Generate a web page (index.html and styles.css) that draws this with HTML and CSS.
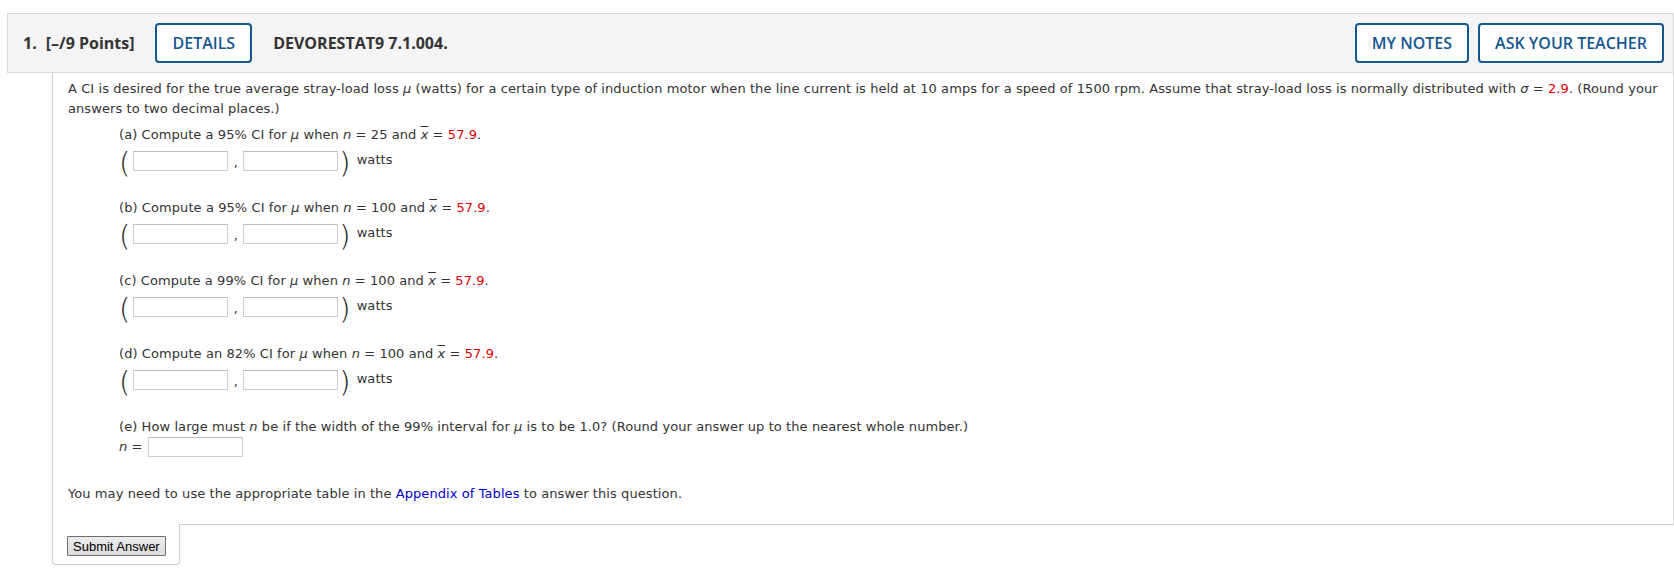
FILE: index.html
```html
<!DOCTYPE html>
<html lang="en">
<head>
<meta charset="utf-8">
<title>DEVORESTAT9 7.1.004.</title>
<link rel="stylesheet" href="styles.css">
</head>
<body>
<div class="question">
  <div class="q-header">
    <span class="q-num">1.</span>
    <span class="q-points">[–/9 Points]</span>
    <button class="hbtn">DETAILS</button>
    <span class="q-id">DEVORESTAT9 7.1.004.</span>
    <span class="spacer"></span>
    <button class="hbtn">MY NOTES</button>
    <button class="hbtn">ASK YOUR TEACHER</button>
  </div>
  <div class="q-body">
    <p class="intro">A CI is desired for the true average stray-load loss <i>μ</i> (watts) for a certain type of induction motor when the line current is held at 10 amps for a speed of 1500 rpm. Assume that stray-load loss is normally distributed with <i>σ</i> = <span class="red">2.9</span>. (Round your answers to two decimal places.)</p>

    <div class="part">
      <div class="part-q">(a) Compute a 95% CI for <i>μ</i> when <i>n</i> = 25 and <i class="xbar">x</i> = <span class="red">57.9</span>.</div>
      <div class="ci-row"><span class="paren lp">(</span><span class="box"></span><span class="comma">,</span><span class="box"></span><span class="paren rp">)</span><span class="unit">watts</span></div>
    </div>

    <div class="part">
      <div class="part-q">(b) Compute a 95% CI for <i>μ</i> when <i>n</i> = 100 and <i class="xbar">x</i> = <span class="red">57.9</span>.</div>
      <div class="ci-row"><span class="paren lp">(</span><span class="box"></span><span class="comma">,</span><span class="box"></span><span class="paren rp">)</span><span class="unit">watts</span></div>
    </div>

    <div class="part">
      <div class="part-q">(c) Compute a 99% CI for <i>μ</i> when <i>n</i> = 100 and <i class="xbar">x</i> = <span class="red">57.9</span>.</div>
      <div class="ci-row"><span class="paren lp">(</span><span class="box"></span><span class="comma">,</span><span class="box"></span><span class="paren rp">)</span><span class="unit">watts</span></div>
    </div>

    <div class="part">
      <div class="part-q">(d) Compute an 82% CI for <i>μ</i> when <i>n</i> = 100 and <i class="xbar">x</i> = <span class="red">57.9</span>.</div>
      <div class="ci-row"><span class="paren lp">(</span><span class="box"></span><span class="comma">,</span><span class="box"></span><span class="paren rp">)</span><span class="unit">watts</span></div>
    </div>

    <div class="part part-e">
      <div class="part-q">(e) How large must <i>n</i> be if the width of the 99% interval for <i>μ</i> is to be 1.0? (Round your answer up to the nearest whole number.)</div>
      <div class="n-row"><span class="n-label"><i>n</i> =</span><span class="box"></span></div>
    </div>

    <p class="note">You may need to use the appropriate table in the <a href="#" class="link">Appendix of Tables</a> to answer this question.</p>
  </div>
  <div class="q-footer">
    <div class="submit-box"><button class="submit">Submit Answer</button></div>
    <div class="footer-fill"></div>
  </div>
</div>
</body>
</html>
```

FILE: styles.css
```css
html, body {
  margin: 0;
  padding: 0;
  background: #ffffff;
}

.question {
  padding: 13px 0 0 7px;
}

.q-header {
  display: flex;
  align-items: center;
  height: 58px;
  padding: 0 9px 0 15px;
  background: #f4f4f4;
  border: 1px solid #d9d9d9;
  font-family: "Open Sans", "Liberation Sans", sans-serif;
  font-weight: 700;
  font-size: 16px;
  color: #333333;
}

.q-num {
  margin-right: 9px;
}

.q-points {
  margin-right: 21px;
}

.q-id {
  margin-left: 21px;
}

.spacer {
  flex: 1;
}

.hbtn {
  height: 40px;
  padding: 0 15px;
  margin: 0;
  border: 2px solid #16578f;
  border-radius: 4px;
  background: #ffffff;
  color: #16578f;
  font-family: "Open Sans", "Liberation Sans", sans-serif;
  font-weight: 600;
  font-size: 16px;
  cursor: pointer;
}

.hbtn + .hbtn {
  margin-left: 9px;
}

.q-body {
  margin-left: 45px;
  border-left: 1px solid #cccccc;
  border-right: 1px solid #d9d9d9;
  padding: 6px 3px 20px 15px;
  font-family: "DejaVu Sans", Verdana, sans-serif;
  font-size: 13px;
  letter-spacing: 0.08px;
  line-height: 20px;
  color: #333333;
}

.intro {
  margin: 0;
}

.red {
  color: #e00000;
}

i {
  font-style: italic;
}

.xbar {
  text-decoration: overline;
}

.part {
  margin: 6px 0 0 51px;
}

.part + .part {
  margin-top: 21px;
}

.part-q {
  height: 20px;
}

.ci-row {
  display: flex;
  align-items: center;
  height: 32px;
}

.paren {
  font-family: "DejaVu Sans", sans-serif;
  font-weight: 200;
  font-size: 29px;
  line-height: 32px;
  color: #1e1e1e;
  margin-top: 4px;
  letter-spacing: 0;
}

.lp {
  margin-right: 3px;
}

.rp {
  margin-left: 1px;
}

.box {
  display: inline-block;
  width: 93px;
  height: 18px;
  border: 1px solid #cdcdcd;
  border-top-color: #bdbdbd;
  background: #ffffff;
}

.comma {
  width: 15px;
  text-align: center;
  line-height: 20px;
  margin-top: 4px;
}

.unit {
  margin-left: 6px;
  margin-top: -2px;
}

.n-row {
  display: flex;
  align-items: center;
  height: 20px;
}

.n-label {
  width: 29px;
}

.note {
  margin: 27px 0 0 0;
}

.link {
  color: #0000cc;
  text-decoration: none;
}

.q-footer {
  display: flex;
  margin-left: 45px;
}

.submit-box {
  border: 1px solid #cccccc;
  border-top: none;
  border-radius: 0 0 4px 4px;
  padding: 12px 13px 8px 14px;
}

.footer-fill {
  flex: 1;
  border-top: 1px solid #cccccc;
  border-right: 1px solid #d9d9d9;
  height: 0;
}

.submit {
  font-family: "Liberation Sans", Arial, sans-serif;
  font-size: 13px;
  height: 20px;
  padding: 0 5px;
  margin: 0;
  border: 1px solid #6e6e6e;
  border-radius: 1px;
  background: linear-gradient(#ececec, #dcdcdc);
  color: #000000;
  cursor: pointer;
}
```
